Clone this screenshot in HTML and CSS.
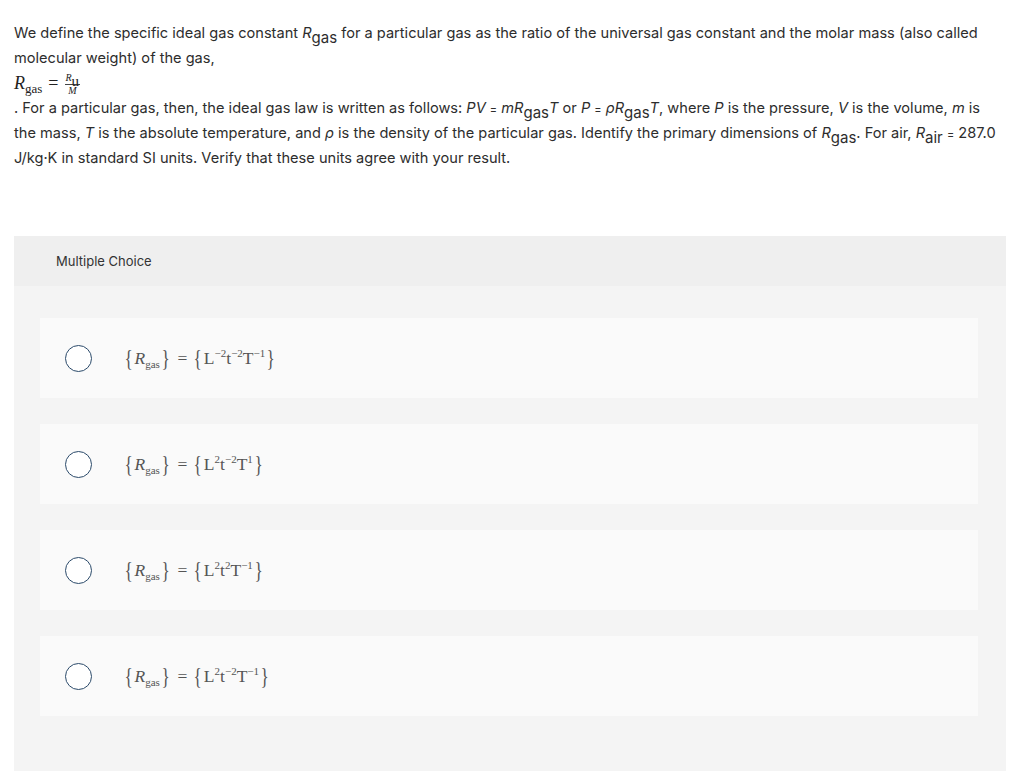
FILE: index.html
```html
<!DOCTYPE html>
<html>
<head>
<meta charset="utf-8">
<link rel="stylesheet" href="styles.css">
</head>
<body>
<div class="question">
  <p class="prompt">We define the specific ideal gas constant <i>R</i><sub>gas</sub> for a particular gas as the ratio of the universal gas constant and the molar mass (also called molecular weight) of the gas,<br>
  <span class="eq"><i>R</i><sub class="ss">gas</sub><span class="eqs">=</span><span class="frac"><span class="num"><i>R</i><sub class="s2">u</sub></span><span class="den"><i>M</i></span></span></span><br>
  . For a particular gas, then, the ideal gas law is written as follows: <i>PV</i> <span class="sm">=</span> <i>mR</i><sub>gas</sub><i>T</i> or <i>P</i> <span class="sm">=</span> <i>ρR</i><sub>gas</sub><i>T</i>, where <i>P</i> is the pressure, <i>V</i> is the volume, <i>m</i> is the mass, <i>T</i> is the absolute temperature, and <i>ρ</i> is the density of the particular gas. Identify the primary dimensions of <i>R</i><sub>gas</sub>. For air, <i>R</i><sub>air</sub> <span class="sm">=</span> 287.0 J/kg·K in standard SI units. Verify that these units agree with your result.</p>
</div>

<section class="panel">
  <div class="panel-head">Multiple Choice</div>
  <div class="panel-body">
    <div class="option">
      <span class="radio"></span>
      <span class="math"><span class="br">{</span><i>R</i><sub>gas</sub><span class="br">}</span><span class="meq">=</span><span class="br">{</span>L<sup>−2</sup>t<sup>−2</sup>T<sup>−1</sup><span class="br">}</span></span>
    </div>
    <div class="option">
      <span class="radio"></span>
      <span class="math"><span class="br">{</span><i>R</i><sub>gas</sub><span class="br">}</span><span class="meq">=</span><span class="br">{</span>L<sup>2</sup>t<sup>−2</sup>T<sup>1</sup><span class="br">}</span></span>
    </div>
    <div class="option">
      <span class="radio"></span>
      <span class="math"><span class="br">{</span><i>R</i><sub>gas</sub><span class="br">}</span><span class="meq">=</span><span class="br">{</span>L<sup>2</sup>t<sup>2</sup>T<sup>−1</sup><span class="br">}</span></span>
    </div>
    <div class="option">
      <span class="radio"></span>
      <span class="math"><span class="br">{</span><i>R</i><sub>gas</sub><span class="br">}</span><span class="meq">=</span><span class="br">{</span>L<sup>2</sup>t<sup>−2</sup>T<sup>−1</sup><span class="br">}</span></span>
    </div>
  </div>
</section>
</body>
</html>
```

FILE: styles.css
```css
html, body {
  margin: 0;
  padding: 0;
  background: #ffffff;
}
body {
  font-family: "Inter", "Open Sans", "Liberation Sans", sans-serif;
  color: #2d2d2d;
}
.question {
  padding: 21px 18px 0 14px;
}
.prompt {
  margin: 0;
  font-size: 14.6px;
  line-height: 25px;
}
.prompt sub {
  font-size: 15px;
  vertical-align: -5px;
  line-height: 0;
}
.sm {
  font-size: 11px;
  line-height: 1;
}
.eq {
  font-family: "Liberation Serif", "DejaVu Serif", serif;
  font-size: 18px;
  color: #222;
  display: inline-block;
  line-height: 18px;
  vertical-align: -1px;
}
.eq sub.ss {
  font-size: 13px;
  vertical-align: -4px;
  line-height: 0;
}
.eqs {
  margin: 0 6px 0 6px;
  font-size: 18px;
}
.frac {
  display: inline-block;
  text-align: center;
  font-size: 10px;
  line-height: 10px;
  vertical-align: -5px;
}
.num {
  display: block;
  border-bottom: 1px solid #444;
  padding: 0 1px 1px;
}
.den {
  display: block;
  padding-top: 1px;
}
.s2 {
  font-size: 7px;
  vertical-align: -2px;
  line-height: 0;
}
.panel {
  margin: 65px 18px 10px 14px;
  background: #f4f4f4;
}
.panel-head {
  background: #efefef;
  height: 50px;
  padding-left: 42px;
  display: flex;
  align-items: center;
  font-size: 13px;
  color: #333;
}
.panel-body {
  padding: 32px 28px 55px 26px;
  display: flex;
  flex-direction: column;
  gap: 26px;
}
.option {
  background: #fafafa;
  height: 80px;
  display: flex;
  align-items: center;
  padding-left: 25px;
}
.radio {
  width: 27px;
  height: 27px;
  border: 1.5px solid #2b4a6a;
  border-radius: 50%;
  background: #fff;
  box-sizing: border-box;
  flex: none;
}
.math {
  display: block;
  margin-left: 31px;
  font-family: "Liberation Serif", "DejaVu Serif", serif;
  font-size: 17.5px;
  line-height: 24px;
  color: #555;
  white-space: nowrap;
}
.br {
  display: inline-block;
  font-size: 24px;
  transform: scaleX(0.72);
  vertical-align: -2px;
  margin: 0;
}
.meq {
  margin: 0 5px 0 6px;
}
.math sub {
  font-size: 11px;
  vertical-align: -4px;
  line-height: 0;
}
.math sup {
  font-size: 11px;
  vertical-align: 7px;
  line-height: 0;
}
```
